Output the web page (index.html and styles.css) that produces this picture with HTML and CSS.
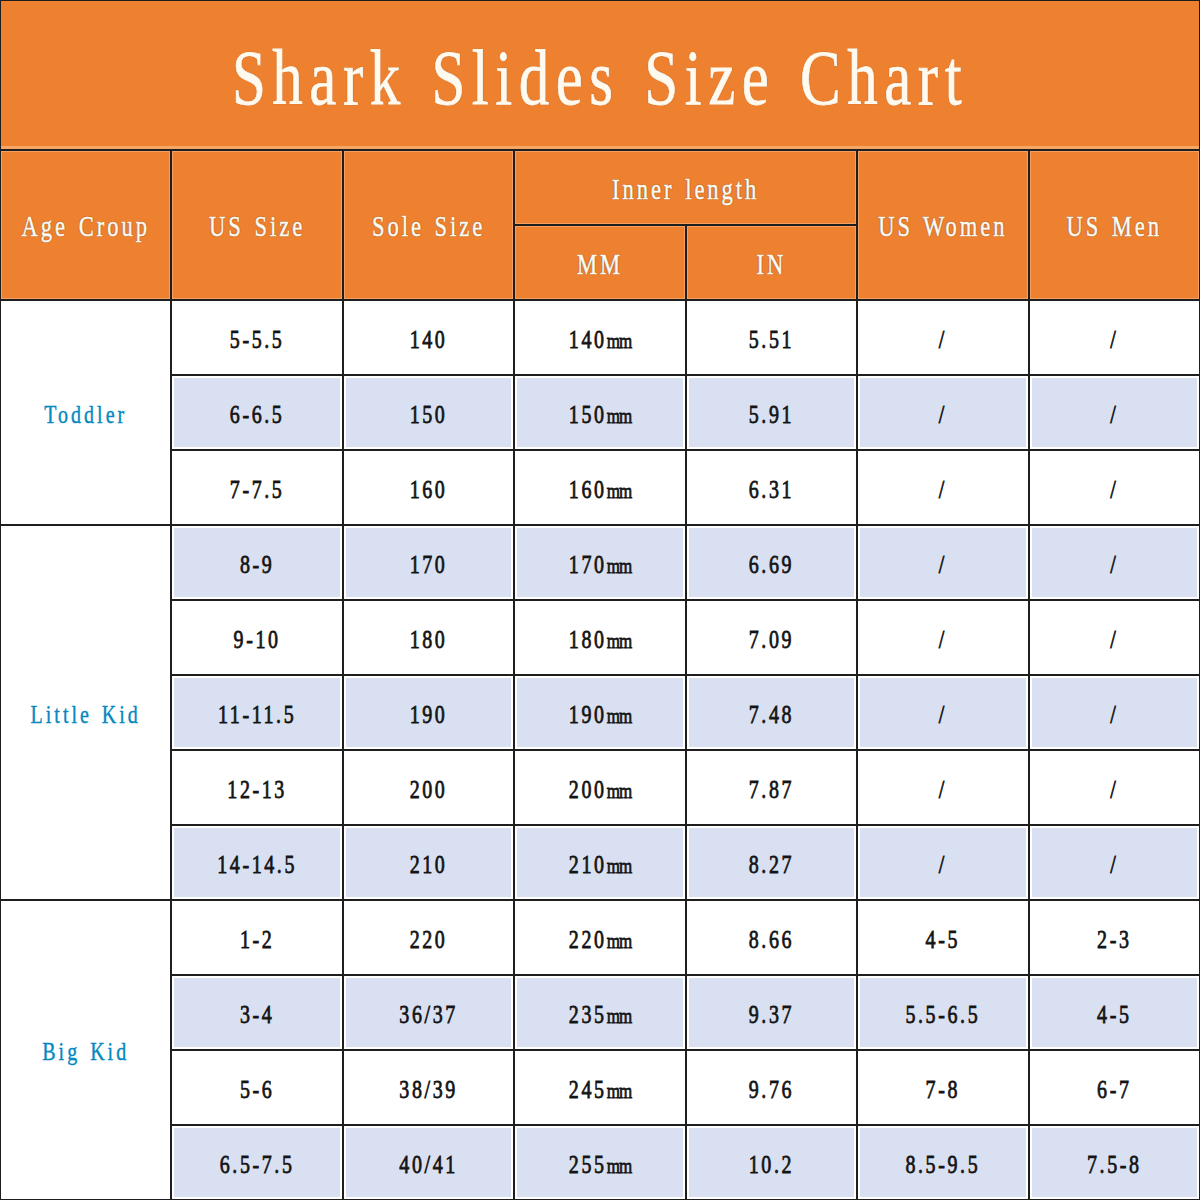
FILE: index.html
```html
<!DOCTYPE html>
<html lang="en">
<head>
<meta charset="utf-8">
<title>Shark Slides Size Chart</title>
<link rel="stylesheet" href="styles.css">
</head>
<body>
<div class="chart">
  <div class="title"><span class="t">Shark Slides Size Chart</span></div>

  <div class="hd tall"><span class="t">Age Croup</span></div>
  <div class="hd tall"><span class="t">US Size</span></div>
  <div class="hd tall"><span class="t">Sole Size</span></div>
  <div class="hd wide"><span class="t">Inner length</span></div>
  <div class="hd tall"><span class="t">US Women</span></div>
  <div class="hd tall"><span class="t">US Men</span></div>
  <div class="hd"><span class="t">MM</span></div>
  <div class="hd"><span class="t">IN</span></div>

  <div class="age span3"><span class="t">Toddler</span></div>
  <div class="c"><span class="t">5-5.5</span></div><div class="c"><span class="t">140</span></div><div class="c"><span class="t">140<span class="mm">mm</span></span></div><div class="c"><span class="t">5.51</span></div><div class="c"><span class="t">/</span></div><div class="c"><span class="t">/</span></div>
  <div class="c b"><span class="t">6-6.5</span></div><div class="c b"><span class="t">150</span></div><div class="c b"><span class="t">150<span class="mm">mm</span></span></div><div class="c b"><span class="t">5.91</span></div><div class="c b"><span class="t">/</span></div><div class="c b"><span class="t">/</span></div>
  <div class="c"><span class="t">7-7.5</span></div><div class="c"><span class="t">160</span></div><div class="c"><span class="t">160<span class="mm">mm</span></span></div><div class="c"><span class="t">6.31</span></div><div class="c"><span class="t">/</span></div><div class="c"><span class="t">/</span></div>

  <div class="age span5"><span class="t">Little Kid</span></div>
  <div class="c b"><span class="t">8-9</span></div><div class="c b"><span class="t">170</span></div><div class="c b"><span class="t">170<span class="mm">mm</span></span></div><div class="c b"><span class="t">6.69</span></div><div class="c b"><span class="t">/</span></div><div class="c b"><span class="t">/</span></div>
  <div class="c"><span class="t">9-10</span></div><div class="c"><span class="t">180</span></div><div class="c"><span class="t">180<span class="mm">mm</span></span></div><div class="c"><span class="t">7.09</span></div><div class="c"><span class="t">/</span></div><div class="c"><span class="t">/</span></div>
  <div class="c b"><span class="t">11-11.5</span></div><div class="c b"><span class="t">190</span></div><div class="c b"><span class="t">190<span class="mm">mm</span></span></div><div class="c b"><span class="t">7.48</span></div><div class="c b"><span class="t">/</span></div><div class="c b"><span class="t">/</span></div>
  <div class="c"><span class="t">12-13</span></div><div class="c"><span class="t">200</span></div><div class="c"><span class="t">200<span class="mm">mm</span></span></div><div class="c"><span class="t">7.87</span></div><div class="c"><span class="t">/</span></div><div class="c"><span class="t">/</span></div>
  <div class="c b"><span class="t">14-14.5</span></div><div class="c b"><span class="t">210</span></div><div class="c b"><span class="t">210<span class="mm">mm</span></span></div><div class="c b"><span class="t">8.27</span></div><div class="c b"><span class="t">/</span></div><div class="c b"><span class="t">/</span></div>

  <div class="age span4"><span class="t">Big Kid</span></div>
  <div class="c"><span class="t">1-2</span></div><div class="c"><span class="t">220</span></div><div class="c"><span class="t">220<span class="mm">mm</span></span></div><div class="c"><span class="t">8.66</span></div><div class="c"><span class="t">4-5</span></div><div class="c"><span class="t">2-3</span></div>
  <div class="c b"><span class="t">3-4</span></div><div class="c b"><span class="t">36/37</span></div><div class="c b"><span class="t">235<span class="mm">mm</span></span></div><div class="c b"><span class="t">9.37</span></div><div class="c b"><span class="t">5.5-6.5</span></div><div class="c b"><span class="t">4-5</span></div>
  <div class="c"><span class="t">5-6</span></div><div class="c"><span class="t">38/39</span></div><div class="c"><span class="t">245<span class="mm">mm</span></span></div><div class="c"><span class="t">9.76</span></div><div class="c"><span class="t">7-8</span></div><div class="c"><span class="t">6-7</span></div>
  <div class="c b"><span class="t">6.5-7.5</span></div><div class="c b"><span class="t">40/41</span></div><div class="c b"><span class="t">255<span class="mm">mm</span></span></div><div class="c b"><span class="t">10.2</span></div><div class="c b"><span class="t">8.5-9.5</span></div><div class="c b"><span class="t">7.5-8</span></div>
</div>
</body>
</html>
```

FILE: styles.css
```css
html, body {
  margin: 0;
  padding: 0;
  background: #ffffff;
}

.chart {
  box-sizing: border-box;
  width: 1200px;
  height: 1200px;
  display: grid;
  grid-template-columns: repeat(7, 1fr);
  grid-template-rows: 148px repeat(14, 73px);
  gap: 2px;
  border: 1px solid #1e1e1e;
  background: #1e1e1e;
  font-family: "Liberation Serif", "Times New Roman", serif;
}

.chart > div {
  display: flex;
  align-items: center;
  justify-content: center;
  background: #ffffff;
}

.t {
  display: inline-block;
  transform: scaleY(1.28);
  white-space: nowrap;
}

.title {
  grid-column: 1 / span 7;
  background: #ee8130 !important;
  box-shadow: inset 0 -3px 0 #f6a765;
  color: #fffaf0;
  font-size: 61px;
  letter-spacing: 6.5px;
  word-spacing: 3px;
  text-shadow: 0 0 1px #6b3a12;
  -webkit-text-stroke: 0.6px #fffaf0;
  padding-top: 6px;
}

.hd {
  background: #ee8130 !important;
  box-shadow: inset 0 0 0 1px #f5a060;
  color: #fffaf0;
  font-size: 22.5px;
  letter-spacing: 3px;
  word-spacing: 2px;
  text-shadow: 0 0 1px #5a300c, 0 0 1px #5a300c;
  -webkit-text-stroke: 0.5px #fffaf0;
  padding-top: 4px;
}

.hd.tall {
  grid-row: span 2;
}

.hd.wide {
  grid-column: span 2;
}

.age {
  color: #0589c0;
  font-size: 20px;
  letter-spacing: 3px;
  word-spacing: 2px;
  -webkit-text-stroke: 0.3px #0589c0;
  padding-top: 3px;
}

.span3 { grid-row: span 3; }
.span5 { grid-row: span 5; }
.span4 { grid-row: span 4; }

.c {
  color: #141414;
  font-size: 20px;
  letter-spacing: 2.6px;
  padding-top: 3px;
  -webkit-text-stroke: 0.6px #141414;
}

.c.b {
  background: #d9e0f2;
  box-shadow: inset 0 0 0 2px #ffffff;
}

.mm {
  font-size: 17px;
  letter-spacing: -1px;
}
```
